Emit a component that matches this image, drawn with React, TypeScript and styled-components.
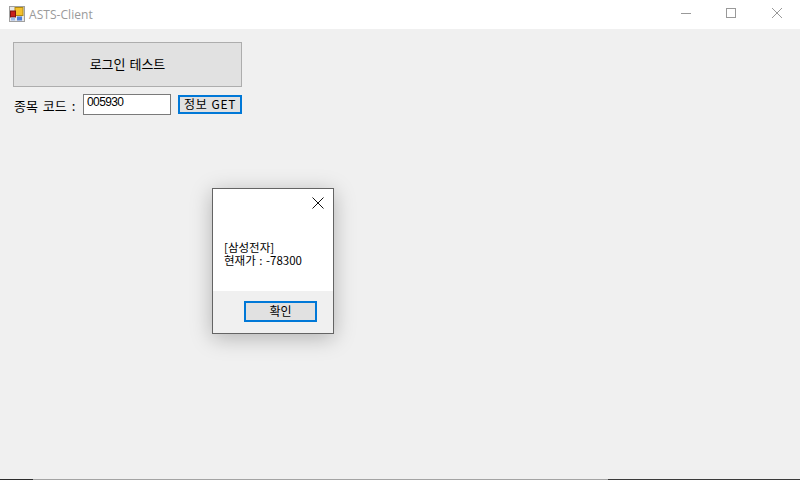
import styled, { createGlobalStyle } from "styled-components";

const GlobalStyle = createGlobalStyle`
  html, body {
    margin: 0;
    padding: 0;
    background: #f0f0f0;
  }
  * {
    box-sizing: border-box;
  }
`;

const FONT = `"Noto Sans CJK KR", "Liberation Sans", sans-serif`;

const App = () => {
  return (
    <Window>
      <GlobalStyle />
      <TitleBar>
        <AppIcon viewBox="0 0 16 16" width="16" height="16">
          <rect x="0.5" y="0.5" width="15" height="15" fill="#e8e8e8" stroke="#a0a0a0" />
          <rect x="6" y="1.5" width="8" height="8" fill="#f5c02c" stroke="#b08a10" />
          <rect x="1.5" y="5" width="5" height="6" fill="#c8201c" stroke="#7a1210" />
          <rect x="2" y="11.5" width="4" height="3" fill="#9db8e8" />
          <rect x="8" y="10.5" width="5" height="4" fill="#4f7fd8" />
        </AppIcon>
        <Title>ASTS-Client</Title>
        <WindowControls>
          <ControlIcon viewBox="0 0 46 29">
            <path d="M19 13.5H29" stroke="#999" fill="none" />
          </ControlIcon>
          <ControlIcon viewBox="0 0 46 29">
            <rect x="18.5" y="8.5" width="9" height="9" stroke="#999" fill="none" />
          </ControlIcon>
          <ControlIcon viewBox="0 0 46 29">
            <path d="M18 8L28 18M28 8L18 18" stroke="#999" fill="none" />
          </ControlIcon>
        </WindowControls>
      </TitleBar>

      <Content>
        <LoginButton>로그인 테스트</LoginButton>
        <CodeRow>
          <CodeLabel>종목 코드 :</CodeLabel>
          <CodeInput readOnly value="005930" />
          <FocusButton $width={64} $height={19} $spacing={0.6}>정보 GET</FocusButton>
        </CodeRow>

        <Dialog>
          <DialogBody>
            <CloseIcon viewBox="0 0 12 12">
              <path d="M0.5 0.5L11.5 11.5M11.5 0.5L0.5 11.5" stroke="#111" fill="none" />
            </CloseIcon>
            <Message>
              [삼성전자]
              <br />
              현재가 : -78300
            </Message>
          </DialogBody>
          <DialogFooter>
            <FocusButton $width={73} $height={21} $spacing={0}>확인</FocusButton>
          </DialogFooter>
        </Dialog>
      </Content>

      <BottomEdge>
        <EdgePart $width={33} $color="#2b2b2b" />
        <EdgePart $width={575} $color="#a3a3a3" />
        <EdgePart $width={192} $color="#3a3a3a" />
      </BottomEdge>
    </Window>
  );
};

export default App;

const Window = styled.div`
  width: 800px;
  height: 480px;
  display: flex;
  flex-direction: column;
  overflow: hidden;
  background: #f0f0f0;
  font-family: ${FONT};
`;

const TitleBar = styled.div`
  height: 29px;
  flex: none;
  display: flex;
  align-items: center;
  padding-left: 9px;
  background: #fff;
`;

const AppIcon = styled.svg`
  display: block;
  margin-top: -2px;
`;

const Title = styled.span`
  margin-left: 4px;
  margin-top: -1px;
  font-family: "Open Sans", "Liberation Sans", sans-serif;
  font-size: 12px;
  letter-spacing: 0.05px;
  color: #9a9a9a;
`;

const WindowControls = styled.div`
  margin-left: auto;
  display: flex;
`;

const ControlIcon = styled.svg`
  display: block;
  width: 46px;
  height: 29px;
`;

const Content = styled.div`
  position: relative;
  flex: 1;
  padding: 13px 0 0 13px;
`;

const LoginButton = styled.div`
  width: 229px;
  height: 45px;
  padding-bottom: 3px;
  display: flex;
  align-items: center;
  justify-content: center;
  background: #e1e1e1;
  border: 1px solid #adadad;
  font-size: 13px;
  word-spacing: 1px;
  color: #000;
`;

const CodeRow = styled.div`
  display: flex;
  align-items: center;
  margin-top: 7px;
  height: 21px;
`;

const CodeLabel = styled.span`
  width: 70px;
  padding: 2px 0 0 1px;
  font-size: 13px;
  word-spacing: 2px;
  color: #000;
  white-space: nowrap;
`;

const CodeInput = styled.input`
  width: 88px;
  height: 21px;
  margin-right: 7px;
  padding: 0 0 5px 3px;
  border: 1px solid #7a7a7a;
  border-radius: 0;
  outline: none;
  background: #fff;
  font-family: "Liberation Sans", sans-serif;
  font-size: 12px;
  letter-spacing: -0.6px;
  color: #000;
`;

const FocusButton = styled.div<{ $width: number; $height: number; $spacing: number }>`
  width: ${(p) => p.$width}px;
  height: ${(p) => p.$height}px;
  padding-bottom: 2px;
  display: flex;
  align-items: center;
  justify-content: center;
  background: #e1e1e1;
  border: 2px solid #0078d7;
  font-size: 12px;
  letter-spacing: ${(p) => p.$spacing}px;
  word-spacing: 1px;
  color: #000;
  white-space: nowrap;
`;

const Dialog = styled.div`
  position: absolute;
  left: 212px;
  top: 159px;
  width: 122px;
  height: 146px;
  display: flex;
  flex-direction: column;
  background: #fff;
  border: 1px solid #646464;
  box-shadow: 0 4px 20px rgba(0, 0, 0, 0.26);
`;

const DialogBody = styled.div`
  position: relative;
  flex: 1;
  padding: 52px 0 0 11px;
`;

const CloseIcon = styled.svg`
  position: absolute;
  top: 8px;
  right: 9px;
  width: 12px;
  height: 12px;
  display: block;
`;

const Message = styled.div`
  font-size: 11.5px;
  line-height: 13px;
  word-spacing: 1px;
  color: #000;
  white-space: nowrap;
`;

const DialogFooter = styled.div`
  height: 42px;
  flex: none;
  display: flex;
  justify-content: flex-end;
  padding: 10px 16px 0 0;
  background: #f0f0f0;
`;

const BottomEdge = styled.div`
  height: 1px;
  flex: none;
  display: flex;
`;

const EdgePart = styled.div<{ $width: number; $color: string }>`
  width: ${(p) => p.$width}px;
  background: ${(p) => p.$color};
`;
